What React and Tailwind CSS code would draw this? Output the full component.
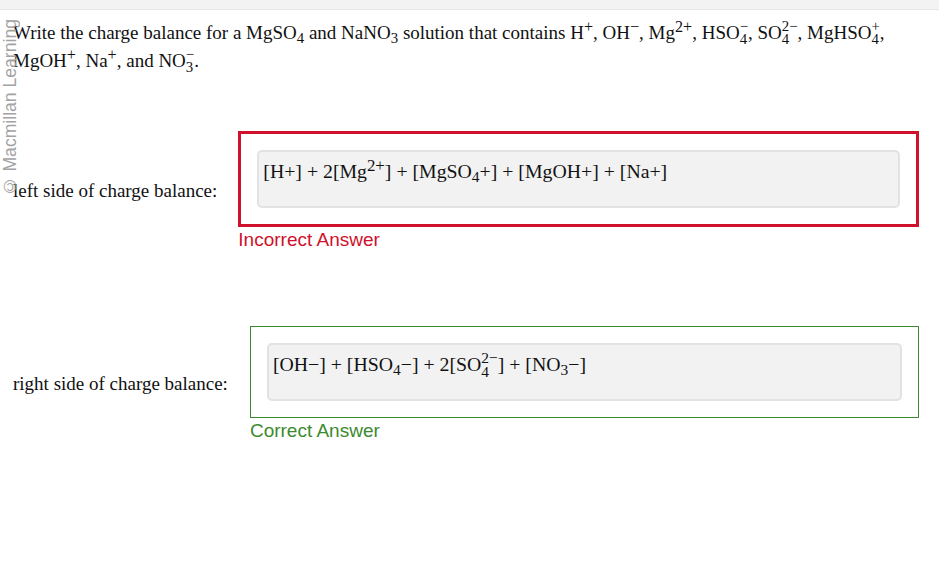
import React from 'react';

const serif = { fontFamily: '"Liberation Serif", "Times New Roman", serif' };

function Stack({ sup, sub }) {
  return (
    <span className="inline-flex flex-col align-middle text-[0.78em] leading-[0.9] -mt-[0.2em]">
      <span>{sup}</span>
      <span>{sub}</span>
    </span>
  );
}

function Sup({ children }) {
  return <sup className="text-[0.85em] relative -top-[0.42em]">{children}</sup>;
}

function Sub({ children }) {
  return <sub className="text-[0.78em]">{children}</sub>;
}

function AnswerRow({ label, correct, children }) {
  const box = correct
    ? 'border border-[#3c8a2e] px-4 pt-4 pb-4'
    : 'border-[3px] border-[#d0112b] pl-4 pr-4 pt-4 pb-4';
  return (
    <div className="flex items-center">
      <div className="shrink-0 text-[19px] text-[#111]" style={serif}>
        {label}
      </div>
      <div className={correct ? 'ml-[22px] flex-1' : 'ml-[21px] flex-1'}>
        <div className={box}>
          <div
            className="h-[58px] rounded-[5px] border-2 border-[#e2e2e2] bg-[#f2f2f2] px-[4px] pt-[7px] text-[19.8px] leading-[24px] text-[#111]"
            style={serif}
          >
            {children}
          </div>
        </div>
        <div
          className={
            correct
              ? 'mt-[1px] text-[19px] leading-[24px] text-[#3c8a2e]'
              : 'mt-[1px] text-[19px] leading-[24px] text-[#d0112b]'
          }
          style={{ fontFamily: '"Liberation Sans", Arial, sans-serif' }}
        >
          {correct ? 'Correct Answer' : 'Incorrect Answer'}
        </div>
      </div>
    </div>
  );
}

export default function App() {
  return (
    <div className="relative min-h-[571px] w-[939px] overflow-hidden bg-white">
      <div className="h-[10px] border-b border-[#e6e6e6] bg-[#f3f3f3]" />

      <div
        className="absolute left-[1px] top-[19px] rotate-180 text-[17.6px] leading-[19px] text-[#a3a3a3]"
        style={{ writingMode: 'vertical-rl', fontFamily: '"Liberation Sans", Arial, sans-serif' }}
      >
        © Macmillan Learning
      </div>

      <div className="pl-[13px] pr-[20px]">
        <p className="mt-[9px] text-[19px] leading-[28px] text-[#111]" style={serif}>
          Write the charge balance for a MgSO<Sub>4</Sub> and NaNO<Sub>3</Sub> solution that contains H<Sup>+</Sup>,
          OH<Sup>−</Sup>, Mg<Sup>2+</Sup>, HSO<Stack sup="−" sub="4" />, SO<Stack sup="2−" sub="4" />, MgHSO
          <Stack sup="+" sub="4" />, MgOH<Sup>+</Sup>, Na<Sup>+</Sup>, and NO<Stack sup="−" sub="3" />.
        </p>

        <div className="mt-[56px]">
          <AnswerRow label="left side of charge balance:">
            [H+] + 2[Mg<Sup>2+</Sup>] + [MgSO<Sub>4</Sub>+] + [MgOH+] + [Na+]
          </AnswerRow>
        </div>

        <div className="mt-[74px]">
          <AnswerRow label="right side of charge balance:" correct>
            [OH−] + [HSO<Sub>4</Sub>−] + 2[SO<Stack sup="2−" sub="4" />] + [NO<Sub>3</Sub>−]
          </AnswerRow>
        </div>
      </div>
    </div>
  );
}
